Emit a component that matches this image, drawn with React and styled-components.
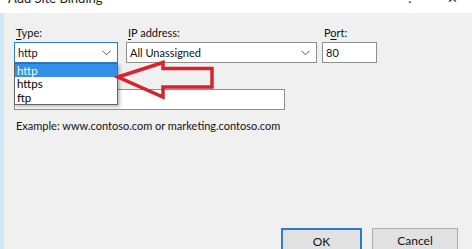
import React from "react";
import styled, { createGlobalStyle } from "styled-components";

const Global = createGlobalStyle`
  html, body { margin: 0; padding: 0; background: #ffffff; }
  body { font-family: Lato, "Noto Sans", sans-serif; color: #000; }
  * { box-sizing: border-box; }
`;

const Window = styled.div`
  position: relative;
  width: 474px;
  height: 249px;
  overflow: hidden;
  display: flex;
  flex-direction: column;
  background: #ffffff;
`;

const TitleBar = styled.div`
  height: 13px;
  flex: none;
  display: flex;
  align-items: flex-end;
  justify-content: space-between;
  padding: 0 16px 0 8px;
  background: #ffffff;
  overflow: hidden;
`;

const Title = styled.div`
  font-size: 13px;
  line-height: 13px;
  margin-bottom: 8px;
  color: #222;
`;

const Controls = styled.div`
  display: flex;
  gap: 34px;
  font-size: 13px;
  line-height: 13px;
  margin-bottom: 8px;
  color: #333;
`;

const Body = styled.div`
  flex: 1;
  display: flex;
  flex-direction: column;
  background: #f0f0f0;
  border-left: 4px solid #cfe8f7;
  margin-right: 2px;
  padding: 12px 14px 0 10px;
  font-size: 11px;
  color: #111;
`;

const FieldRow = styled.div`
  display: grid;
  grid-template-columns: 104px 191px 52px;
  column-gap: 8px;
  & > :nth-child(3) { margin-left: -3px; }
`;

const Field = styled.div`
  display: flex;
  flex-direction: column;
`;

const Label = styled.div`
  height: 17px;
  line-height: 15px;
  padding-left: 2px;
  u { text-decoration: underline; text-underline-offset: 2px; }
`;

const Box = styled.div`
  height: 21px;
  display: flex;
  align-items: center;
  justify-content: space-between;
  padding: 0 6px 0 3px;
  background: #ffffff;
  border: 1px solid ${(p) => (p.$focused ? "#2e7bd0" : "#8f8f8f")};
  width: ${(p) => p.$width || "auto"};
`;

const Chevron = () => (
  <svg width="9" height="6" viewBox="0 0 9 6">
    <path d="M0.5 0.8 L4.5 4.8 L8.5 0.8" fill="none" stroke="#555" strokeWidth="1" />
  </svg>
);

const HostSection = styled.div`
  margin-top: 9px;
  display: flex;
  flex-direction: column;
`;

const Example = styled.div`
  margin-top: 8px;
  padding-left: 2px;
  line-height: 15px;
`;

const Spacer = styled.div`
  flex: 1;
`;

const ButtonRow = styled.div`
  display: flex;
  justify-content: flex-end;
  gap: 10px;
  height: 21px;
`;

const Button = styled.div`
  width: ${(p) => p.$w}px;
  height: 23px;
  display: flex;
  justify-content: center;
  padding-top: 4px;
  background: #e1e1e1;
  border: ${(p) => (p.$default ? "2px solid #2e7bd0" : "1px solid #adadad")};
  font-size: 12px;
`;

const DropList = styled.div`
  position: absolute;
  left: 14px;
  top: 63px;
  width: 104px;
  height: 42px;
  background: #ffffff;
  border: 1px solid #646464;
  box-shadow: 2px 2px 3px rgba(0, 0, 0, 0.25);
  display: flex;
  flex-direction: column;
  font-size: 11.5px;
`;

const Option = styled.div`
  height: 13.3px;
  line-height: 13px;
  padding-left: 2px;
  background: ${(p) => (p.$active ? "#3390e6" : "transparent")};
  color: ${(p) => (p.$active ? "#f4f8ff" : "#000")};
`;

const Arrow = styled.svg`
  position: absolute;
  left: 114px;
  top: 60px;
`;

export default function App() {
  return (
    <>
      <Global />
      <Window>
        <TitleBar>
          <Title>Add Site Binding</Title>
          <Controls>
            <span>?</span>
            <span>✕</span>
          </Controls>
        </TitleBar>
        <Body>
          <FieldRow>
            <Field>
              <Label><u>T</u>ype:</Label>
              <Box $focused>
                <span>http</span>
                <Chevron />
              </Box>
            </Field>
            <Field>
              <Label><u>I</u>P address:</Label>
              <Box>
                <span>All Unassigned</span>
                <Chevron />
              </Box>
            </Field>
            <Field>
              <Label>P<u>o</u>rt:</Label>
              <Box>
                <span>80</span>
              </Box>
            </Field>
          </FieldRow>
          <HostSection>
            <Label><u>H</u>ost name:</Label>
            <Box $width="271px" />
          </HostSection>
          <Example>Example: www.contoso.com or marketing.contoso.com</Example>
          <Spacer />
          <ButtonRow>
            <Button $default $w={81}>OK</Button>
            <Button $w={86}>Cancel</Button>
          </ButtonRow>
        </Body>
        <DropList>
          <Option $active>http</Option>
          <Option>https</Option>
          <Option>ftp</Option>
        </DropList>
        <Arrow width="104" height="42" viewBox="0 0 104 42">
          <path
            d="M4 17 L49 2.5 L49 8.5 L98 8.5 L98 27 L49 27 L49 37 Z"
            fill="none"
            stroke="#d8232c"
            strokeWidth="3.5"
            strokeLinejoin="miter"
          />
        </Arrow>
      </Window>
    </>
  );
}
